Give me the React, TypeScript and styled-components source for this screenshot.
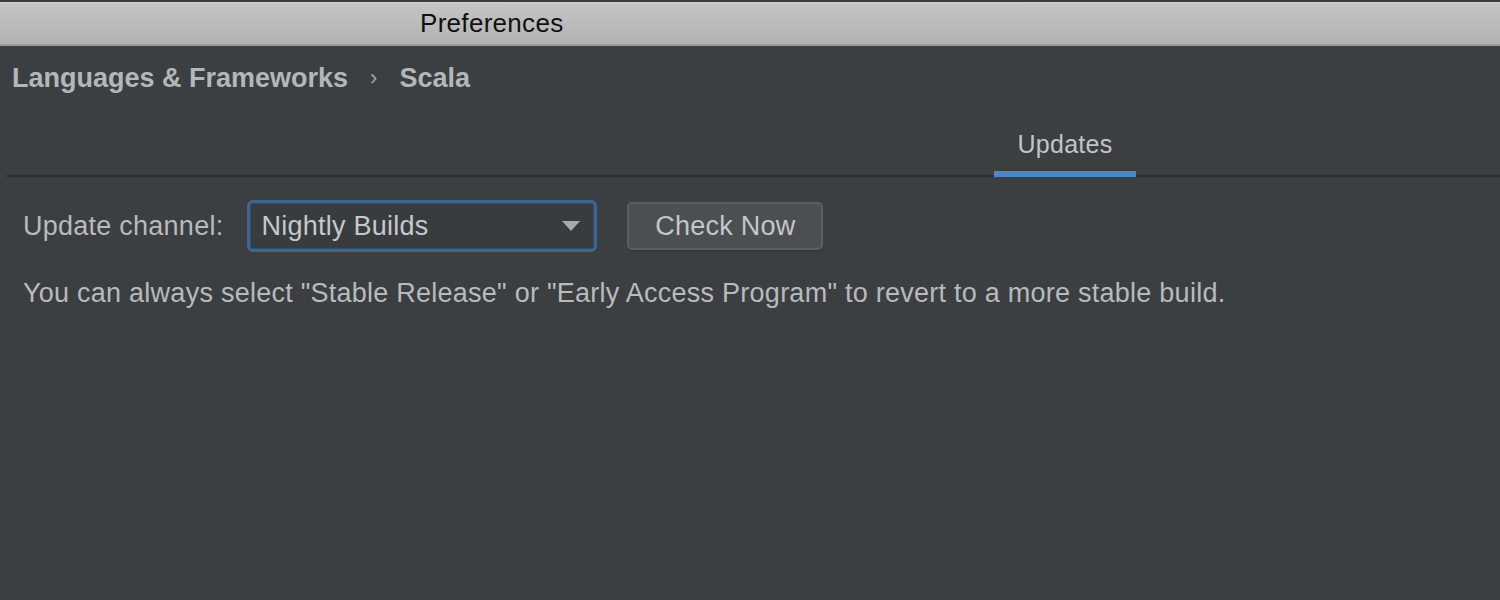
import React from 'react';
import styled, { createGlobalStyle } from 'styled-components';

const GlobalStyle = createGlobalStyle`
	html, body {
		margin: 0;
		padding: 0;
		background: #3c3f41;
	}
	body {
		font-family: "Liberation Sans", Arial, sans-serif;
	}
`;

const Window = styled.div`
	width: 1500px;
	height: 600px;
	display: flex;
	flex-direction: column;
	background: #3c3f41;
	overflow: hidden;
`;

const TitleBar = styled.div`
	height: 42px;
	flex: none;
	display: flex;
	align-items: center;
	padding-left: 420px;
	border-top: 2px solid #3a3a3a;
	border-bottom: 2px solid #9a9a9a;
	background: linear-gradient(#d6d6d6 0, #c4c4c4 2px, #b2b2b2 100%);
	color: #111;
	font-size: 26px;
	letter-spacing: 0.3px;
`;

const Breadcrumbs = styled.div`
	display: flex;
	align-items: center;
	gap: 20px;
	padding: 10px 0 0 12px;
	height: 44px;
	color: #b4b7b9;
	font-weight: bold;
	font-size: 27px;
`;

const Chevron = styled.span`
	font-weight: normal;
	font-size: 22px;
	color: #a4a7a9;
	margin: 0 2px 0 2px;
`;

const TabStrip = styled.div`
	display: flex;
	justify-content: flex-end;
	margin: 21px 0 0 6px;
	padding-right: 364px;
	border-bottom: 2px solid #2e3032;
`;

const Tab = styled.div<{ $active?: boolean }>`
	width: 142px;
	height: 56px;
	box-sizing: border-box;
	display: flex;
	justify-content: center;
	padding-top: 9px;
	color: #c2c4c6;
	font-size: 25px;
	letter-spacing: 0.3px;
	margin-bottom: -2px;
	border-bottom: 6px solid ${p => (p.$active ? '#4a88c7' : 'transparent')};
`;

const Content = styled.div`
	padding: 23px 0 0 23px;
	display: flex;
	flex-direction: column;
	gap: 26px;
	color: #b8babc;
	font-size: 27px;
	letter-spacing: 0.25px;
`;

const Row = styled.div`
	display: flex;
	align-items: center;
`;

const Label = styled.span`
	margin-right: 24px;
`;

const Combo = styled.div`
	width: 350px;
	height: 52px;
	box-sizing: border-box;
	display: flex;
	align-items: center;
	justify-content: space-between;
	padding: 0 14px 0 11px;
	border: 3px solid #3d6692;
	border-radius: 6px;
	background: #393c3e;
	box-shadow: inset 0 0 0 1px #2f4d6c;
	color: #c6c8ca;
`;

const Button = styled.div`
	margin-left: 30px;
	width: 196px;
	height: 48px;
	box-sizing: border-box;
	display: flex;
	align-items: center;
	justify-content: center;
	background: #4b4f51;
	border: 2px solid #5b5e60;
	border-radius: 5px;
	box-shadow: 0 2px 0 #35383a;
	color: #c4c6c8;
`;

const Hint = styled.div``;

export default function App() {
	return (
		<>
			<GlobalStyle />
			<Window>
				<TitleBar>Preferences</TitleBar>
				<Breadcrumbs>
					<span>Languages &amp; Frameworks</span>
					<Chevron>›</Chevron>
					<span>Scala</span>
				</Breadcrumbs>
				<TabStrip>
					<Tab $active>Updates</Tab>
				</TabStrip>
				<Content>
					<Row>
						<Label>Update channel:</Label>
						<Combo>
							<span>Nightly Builds</span>
							<svg width="18" height="10" viewBox="0 0 18 10">
								<path d="M0 0 L18 0 L9 10 Z" fill="#a8aaac" />
							</svg>
						</Combo>
						<Button>Check Now</Button>
					</Row>
					<Hint>
						You can always select "Stable Release" or "Early Access Program" to revert to a
						more stable build.
					</Hint>
				</Content>
			</Window>
		</>
	);
}
